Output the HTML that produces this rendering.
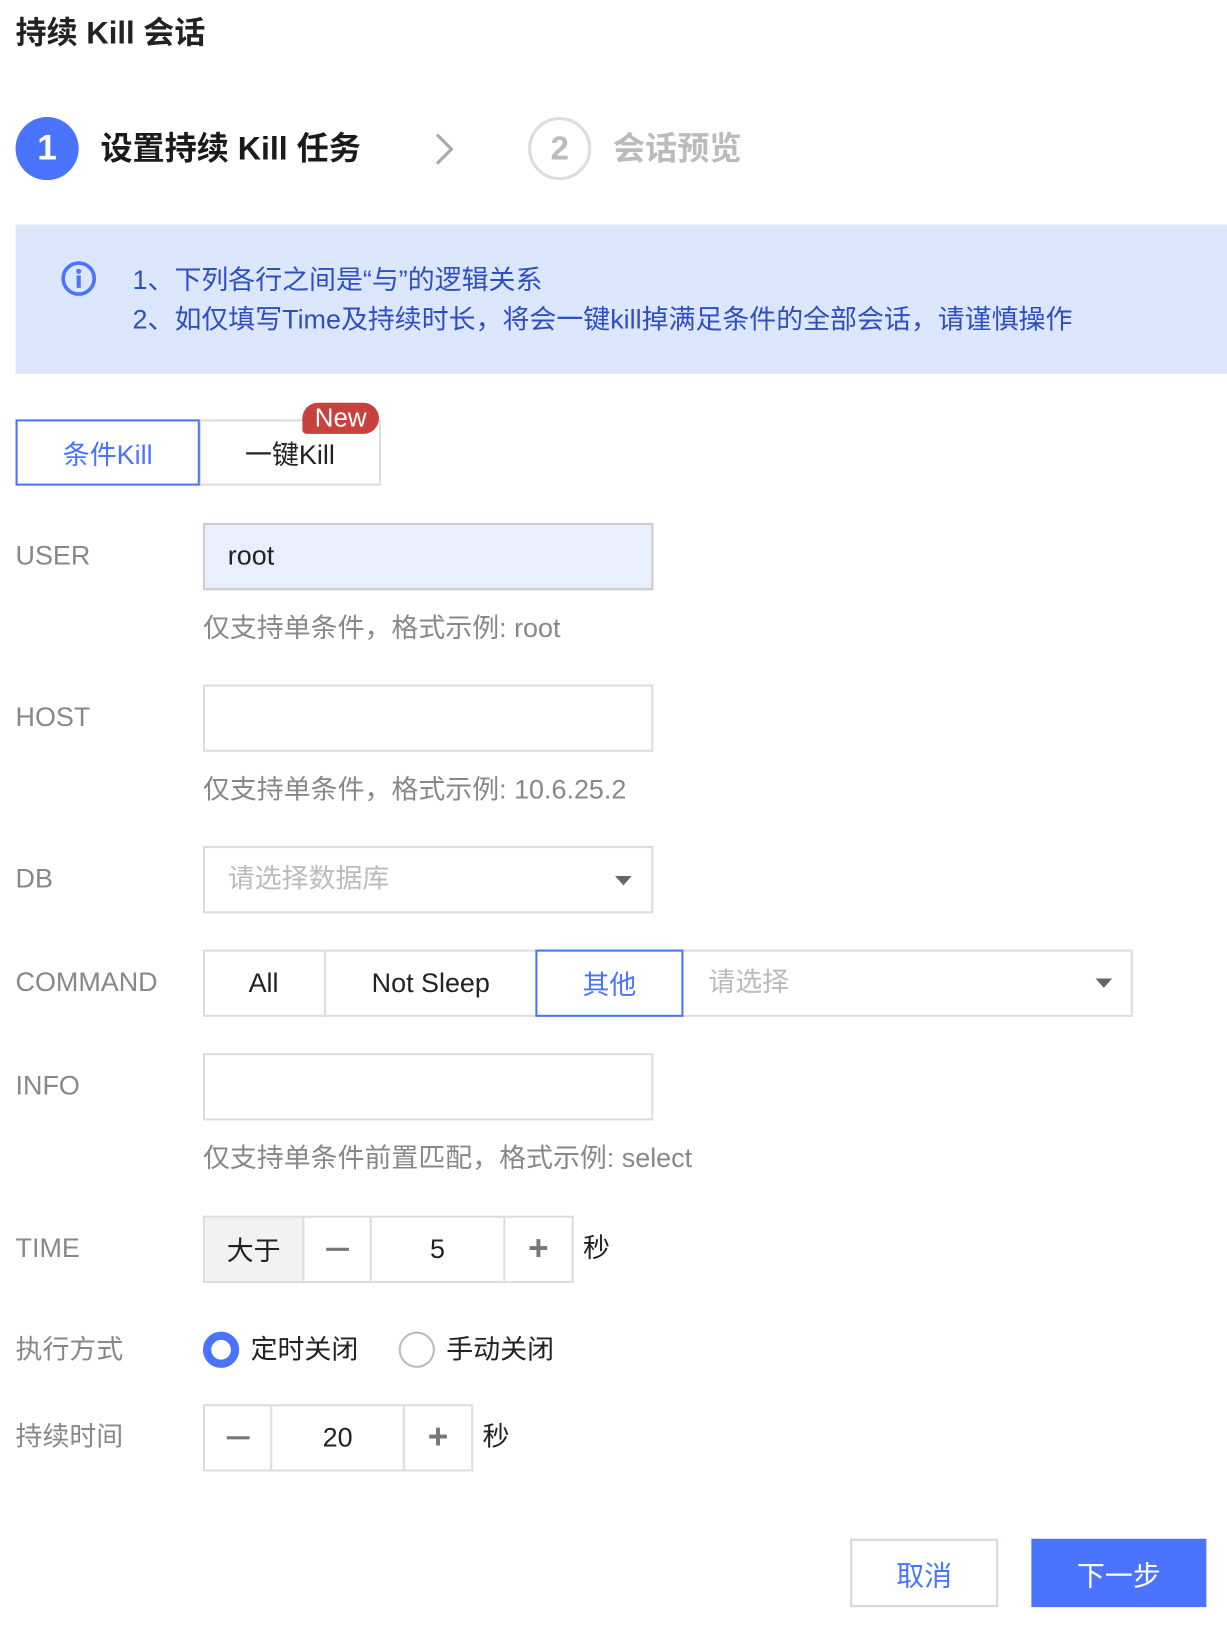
<!DOCTYPE html>
<html><head><meta charset="utf-8"><style>
*{box-sizing:border-box;margin:0;padding:0}
body{width:1227px;height:1624px;background:#fff;position:relative;font-family:"Liberation Sans","Noto Sans CJK SC",sans-serif;overflow:hidden;color:#222}
#w{position:absolute;left:0;top:0;width:1185px;height:1569px;transform:scale(1.0355);transform-origin:0 0}
.a{position:absolute;white-space:nowrap}
.lbl{position:absolute;left:15px;font-size:26px;color:#888;line-height:32px}
.box{position:absolute;border:2px solid #ddd;background:#fff}
.hint{position:absolute;left:196px;font-size:26px;color:#888;line-height:32px}
.c{display:flex;align-items:center;justify-content:center}
.ph{color:#bbb;font-size:26px}
.caret{position:absolute;width:0;height:0;border-left:8px solid transparent;border-right:8px solid transparent;border-top:9px solid #666}
</style></head><body><div id="w">
<div class="a" style="left:15px;top:14px;font-size:30px;font-weight:bold;line-height:38px">持续 Kill 会话</div>

<div class="a c" style="left:15px;top:113px;width:61px;height:61px;border-radius:50%;background:#4a74ff;color:#fff;font-size:34px;font-weight:bold">1</div>
<div class="a" style="left:97px;top:124px;font-size:31px;font-weight:bold;line-height:40px;color:#1a1a1a">设置持续 Kill 任务</div>
<svg class="a" style="left:414px;top:126px" width="30" height="36"><path d="M8 4 L22 18 L8 32" fill="none" stroke="#aaa" stroke-width="3"/></svg>
<div class="a c" style="left:510px;top:113px;width:61px;height:61px;border-radius:50%;border:3px solid #ddd;color:#bbb;font-size:32px;font-weight:bold">2</div>
<div class="a" style="left:592px;top:124px;font-size:31px;font-weight:bold;line-height:40px;color:#bbb">会话预览</div>

<div class="a" style="left:15px;top:217px;width:1170px;height:144px;background:#dce6fc"></div>
<svg class="a" style="left:58px;top:251px" width="36" height="36"><circle cx="18" cy="18" r="15" fill="none" stroke="#4a74ff" stroke-width="3.5"/><circle cx="18" cy="11" r="2.5" fill="#4a74ff"/><rect x="16" y="15" width="4" height="12" fill="#4a74ff"/></svg>
<div class="a" style="left:128px;top:253px;font-size:26px;line-height:34px;color:#2e4fc4">1、下列各行之间是“与”的逻辑关系</div>
<div class="a" style="left:128px;top:291px;font-size:26px;line-height:34px;color:#2e4fc4">2、如仅填写Time及持续时长，将会一键kill掉满足条件的全部会话，请谨慎操作</div>

<div class="box c" style="left:192px;top:405px;width:176px;height:64px;font-size:26px;color:#222">一键Kill</div>
<div class="box c" style="left:15px;top:405px;width:178px;height:64px;border-color:#4a74ff;font-size:26px;color:#4a74ff">条件Kill</div>
<div class="a c" style="left:292px;top:389px;width:74px;height:30px;border-radius:15px 15px 15px 4px;background:#c9413f;color:#fff;font-size:25px">New</div>

<div class="lbl" style="top:520px">USER</div>
<div class="box" style="left:196px;top:505px;width:435px;height:65px;background:#e8effd;border-color:#ccc"></div>
<div class="a" style="left:220px;top:520px;font-size:26px;line-height:32px">root</div>
<div class="hint" style="top:590px">仅支持单条件，格式示例: root</div>

<div class="lbl" style="top:676px">HOST</div>
<div class="box" style="left:196px;top:661px;width:435px;height:65px"></div>
<div class="hint" style="top:746px">仅支持单条件，格式示例: 10.6.25.2</div>

<div class="lbl" style="top:832px">DB</div>
<div class="box" style="left:196px;top:817px;width:435px;height:65px"></div>
<div class="a ph" style="left:220px;top:832px;line-height:32px">请选择数据库</div>
<div class="caret" style="left:594px;top:846px"></div>

<div class="lbl" style="top:932px">COMMAND</div>
<div class="box" style="left:196px;top:917px;width:898px;height:65px"></div>
<div class="a c" style="left:196px;top:917px;width:119px;height:65px;border-right:2px solid #ddd;font-size:26px">All</div>
<div class="a c" style="left:315px;top:917px;width:202px;height:65px;font-size:26px">Not Sleep</div>
<div class="box c" style="left:517px;top:917px;width:143px;height:65px;border-color:#4a74ff;color:#4a74ff;font-size:26px">其他</div>
<div class="a ph" style="left:684px;top:932px;line-height:32px">请选择</div>
<div class="caret" style="left:1058px;top:945px"></div>

<div class="lbl" style="top:1032px">INFO</div>
<div class="box" style="left:196px;top:1017px;width:435px;height:65px"></div>
<div class="hint" style="top:1102px">仅支持单条件前置匹配，格式示例: select</div>

<div class="lbl" style="top:1189px">TIME</div>
<div class="box" style="left:196px;top:1174px;width:358px;height:65px"></div>
<div class="a c" style="left:198px;top:1176px;width:96px;height:61px;background:#f2f2f2;border-right:2px solid #ddd;font-size:26px">大于</div>
<div class="a c" style="left:294px;top:1176px;width:65px;height:61px;border-right:2px solid #ddd"><div style="width:22px;height:3px;background:#777"></div></div>
<div class="a c" style="left:359px;top:1176px;width:129px;height:61px;border-right:2px solid #ddd;font-size:26px">5</div>
<div class="a c" style="left:488px;top:1176px;width:64px;height:61px;font-size:34px;color:#777;font-weight:bold">+</div>
<div class="a" style="left:563px;top:1189px;font-size:26px;line-height:32px">秒</div>

<div class="lbl" style="top:1287px">执行方式</div>
<div class="a" style="left:196px;top:1286px;width:35px;height:35px;border-radius:50%;border:8px solid #4a74ff"></div>
<div class="a" style="left:242px;top:1287px;font-size:26px;line-height:32px">定时关闭</div>
<div class="a" style="left:385px;top:1286px;width:35px;height:35px;border-radius:50%;border:2px solid #bbb"></div>
<div class="a" style="left:431px;top:1287px;font-size:26px;line-height:32px">手动关闭</div>

<div class="lbl" style="top:1371px">持续时间</div>
<div class="box" style="left:196px;top:1356px;width:261px;height:65px"></div>
<div class="a c" style="left:198px;top:1358px;width:65px;height:61px;border-right:2px solid #ddd"><div style="width:22px;height:3px;background:#777"></div></div>
<div class="a c" style="left:263px;top:1358px;width:128px;height:61px;border-right:2px solid #ddd;font-size:26px">20</div>
<div class="a c" style="left:391px;top:1358px;width:64px;height:61px;font-size:34px;color:#777;font-weight:bold">+</div>
<div class="a" style="left:466px;top:1371px;font-size:26px;line-height:32px">秒</div>

<div class="box c" style="left:821px;top:1486px;width:143px;height:66px;border-color:#d3d7e0;color:#4a74ff;font-size:27px">取消</div>
<div class="a c" style="left:996px;top:1486px;width:169px;height:66px;background:#4a74ff;color:#fff;font-size:27px">下一步</div>
</div></body></html>
